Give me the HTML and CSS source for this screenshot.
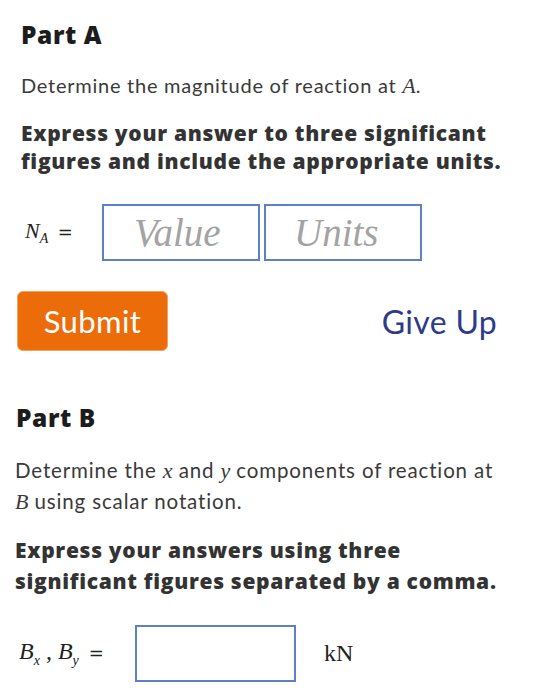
FILE: index.html
```html
<!DOCTYPE html>
<html lang="en">

<head>
    <meta charset="UTF-8">
    <meta name="viewport" content="width=device-width, initial-scale=1.0">
    <title>Part A / Part B</title>
    <link rel="stylesheet" href="styles.css">
</head>

<body>
    <section class="part part-a">
        <h2 class="part-title">Part A</h2>
        <p class="prompt">Determine the magnitude of reaction at <span class="math">A</span>.</p>
        <p class="instruction">Express your answer to three significant figures and include the appropriate units.</p>

        <div class="answer-row">
            <span class="math-label"><i>N</i><sub><i>A</i></sub> <span class="eq">=</span></span>
            <div class="field value-field">Value</div>
            <div class="field units-field">Units</div>
        </div>

        <div class="actions">
            <button type="button" class="submit-button">Submit</button>
            <a class="give-up">Give Up</a>
        </div>
    </section>

    <section class="part part-b">
        <h2 class="part-title">Part B</h2>
        <p class="prompt">Determine the <span class="math">x</span> and <span class="math">y</span> components of reaction at <span class="math">B</span> using scalar notation.</p>
        <p class="instruction">Express your answers using three significant figures separated by a comma.</p>

        <div class="answer-row answer-row-b">
            <span class="math-label"><i>B</i><sub><i>x</i></sub> , <i>B</i><sub><i>y</i></sub> <span class="eq">=</span></span>
            <div class="field blank-field"></div>
            <span class="unit">kN</span>
        </div>
    </section>
</body>

</html>
```

FILE: styles.css
```css
body {
    font-family: Lato, "Open Sans", sans-serif;
    margin: 0;
    padding: 0;
    background-color: #fff;
    color: #333;
}

.part {
    padding: 0 20px 0 21px;
}

/* headings and bold instructions */
.part-title {
    font-family: "Open Sans", sans-serif;
    font-size: 24.5px;
    font-weight: 800;
    letter-spacing: 0.6px;
    color: #1c1c1c;
    margin: 0;
    line-height: 30px;
}

.part-a .part-title {
    padding-top: 20px;
}

.prompt {
    font-size: 20px;
    line-height: 30px;
    letter-spacing: 0.75px;
    margin: 20px 0 0;
    color: #3a3a3a;
}

.math {
    font-family: "Liberation Serif", serif;
    font-style: italic;
    font-size: 22px;
    letter-spacing: 0;
}

.instruction {
    font-family: "Open Sans", sans-serif;
    font-size: 21px;
    font-weight: 800;
    line-height: 28px;
    letter-spacing: 0.7px;
    margin: 18px 0 0;
    color: #333;
}

.answer-row {
    display: flex;
    align-items: center;
    margin-top: 29px;
    padding-left: 4px;
}

.math-label {
    font-family: "Liberation Serif", serif;
    font-size: 22px;
    color: #222;
    width: 77px;
}

.math-label sub {
    font-size: 14px;
}

.eq {
    font-family: "DejaVu Sans", sans-serif;
    font-size: 18px;
    margin-left: 4px;
}

.field {
    border: 2px solid #5b82c9;
    box-sizing: border-box;
    height: 57px;
    font-family: "Liberation Serif", serif;
    font-style: italic;
    font-size: 39px;
    color: #a3a3a3;
    display: flex;
    align-items: center;
}

.value-field {
    width: 158px;
    padding-left: 30px;
}

.units-field {
    width: 158px;
    margin-left: 4px;
    padding-left: 28px;
}

.actions {
    display: flex;
    justify-content: space-between;
    align-items: center;
    margin-top: 30px;
    padding-right: 19px;
}

.submit-button {
    font-family: Lato, sans-serif;
    background-color: #ec6c0a;
    color: #fff;
    border: 1px solid #f2a263;
    border-radius: 6px;
    width: 151px;
    height: 60px;
    font-size: 31px;
    letter-spacing: 0.4px;
    margin-left: -4px;
    padding: 0;
    cursor: pointer;
}

.give-up {
    color: #2e3b87;
    font-size: 32px;
    letter-spacing: 0.3px;
}

.part-b {
    margin-top: 52px;
    padding-left: 15px;
    padding-right: 28px;
}

.part-b .part-title {
    margin-left: 1px;
}

.part-b .prompt {
    margin-top: 22px;
    font-size: 20.5px;
    letter-spacing: 0.85px;
}

.part-b .instruction {
    margin-top: 18px;
    line-height: 31px;
}

.answer-row-b {
    margin-top: 28px;
    padding-left: 4px;
}

.answer-row-b .math-label {
    font-size: 24px;
    width: 116px;
}

.blank-field {
    width: 161px;
    height: 57px;
}

.unit {
    font-family: "Liberation Serif", serif;
    font-size: 24px;
    color: #222;
    margin-left: 28px;
}
```
